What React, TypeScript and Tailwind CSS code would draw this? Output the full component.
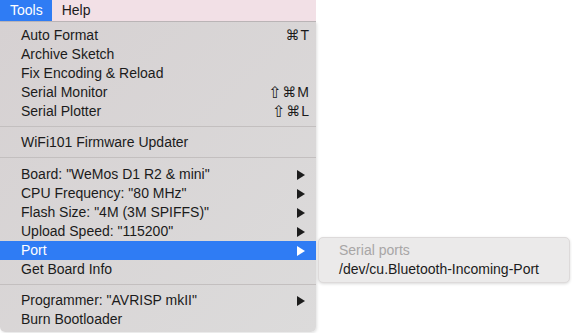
import React from "react";

const font = { fontFamily: '"Liberation Sans", Arial, "DejaVu Sans", sans-serif' };

function Arrow({ white }: { white?: boolean }) {
  return (
    <svg width="8" height="10" viewBox="0 0 8 10" className="absolute left-[297px] top-[5px]">
      <path d="M0 0 L8 5 L0 10 Z" fill={white ? "#ffffff" : "#1c1c1c"} />
    </svg>
  );
}

function Item({ label, shortcut, arrow, active }: { label: string; shortcut?: string; arrow?: boolean; active?: boolean }) {
  return (
    <div
      className={
        "relative h-[19px] leading-[19px] pl-[21px] pr-[7px] flex items-center justify-between text-[14px] " +
        (active ? "bg-[#2f7cf4] text-white" : "text-[#1b1b1b]")
      }
    >
      <span>{label}</span>
      {shortcut && (
        <span className="flex items-center gap-[1px] text-[14px]">
          {shortcut.split("").map((c, i) => (
            <span
              key={i}
              style={{ fontFamily: c === "⇧" || c === "⌘" ? '"DejaVu Sans", sans-serif' : '"Liberation Sans", sans-serif' }}
              className={c === "⇧" ? "text-[16px] leading-[19px]" : ""}
            >
              {c}
            </span>
          ))}
        </span>
      )}
      {arrow && <Arrow white={active} />}
    </div>
  );
}

function Sep({ h }: { h: number }) {
  return (
    <div className={h === 13 ? "h-[13px] flex flex-col pt-[5px]" : "h-[12px] flex flex-col pt-[5px]"}>
      <div className="h-px bg-[#c3bfbf]" />
    </div>
  );
}

export default function App() {
  return (
    <div className="relative w-[572px] h-[333px] bg-white overflow-hidden" style={font}>
      <div className="w-[316px] h-[21px] bg-[#f2e0e6] flex text-[14px] leading-[21px] text-[#1b1b1b] border-b border-[#bdb7b9] box-content">
        <div className="bg-[#2f7cf4] text-white pl-[10px] pr-[9px]">Tools</div>
        <div className="pl-[10px]">Help</div>
      </div>
      <div className="w-[316px] bg-gradient-to-br from-[#d6d1d2] to-[#dcdbdb] pt-[4px] pb-[3px] rounded-b-[5px] shadow-[1px_1px_3px_rgba(0,0,0,0.12)]">
        <Item label="Auto Format" shortcut="⌘T" />
        <Item label="Archive Sketch" />
        <Item label="Fix Encoding & Reload" />
        <Item label="Serial Monitor" shortcut="⇧⌘M" />
        <Item label="Serial Plotter" shortcut="⇧⌘L" />
        <Sep h={12} />
        <Item label="WiFi101 Firmware Updater" />
        <Sep h={13} />
        <Item label={'Board: "WeMos D1 R2 & mini"'} arrow />
        <Item label={'CPU Frequency: "80 MHz"'} arrow />
        <Item label={'Flash Size: "4M (3M SPIFFS)"'} arrow />
        <Item label={'Upload Speed: "115200"'} arrow />
        <Item label="Port" arrow active />
        <Item label="Get Board Info" />
        <Sep h={12} />
        <Item label={'Programmer: "AVRISP mkII"'} arrow />
        <Item label="Burn Bootloader" />
      </div>
      <div className="absolute left-[318px] top-[237px] w-[252px] h-[46px] bg-[#ebeaea] rounded-[5px] border border-[#dddada] shadow-[0_1px_3px_rgba(0,0,0,0.15)] pt-[3px] text-[14px]">
        <div className="h-[19px] leading-[19px] pl-[20px] text-[#a8a6a6]">Serial ports</div>
        <div className="h-[19px] leading-[19px] pl-[20px] text-[#1b1b1b]">/dev/cu.Bluetooth-Incoming-Port</div>
      </div>
    </div>
  );
}
